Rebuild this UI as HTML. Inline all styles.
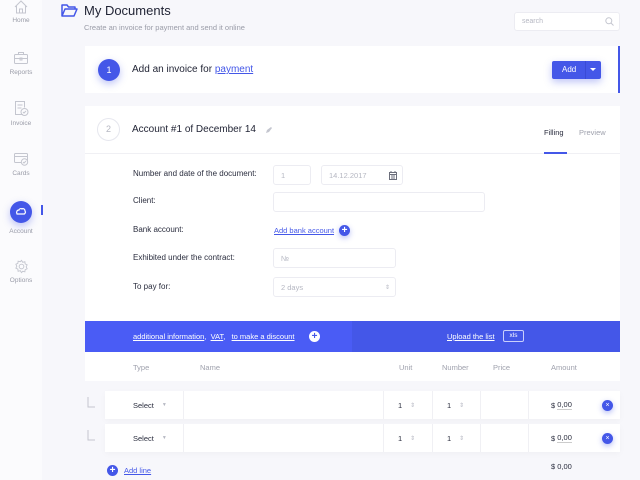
<!DOCTYPE html>
<html><head><meta charset="utf-8"><style>
*{box-sizing:border-box;margin:0;padding:0}
body{width:640px;height:480px;overflow:hidden;background:#f7f7fb;font-family:"Liberation Sans",sans-serif;color:#2a2d3e;position:relative}
.abs{position:absolute}
.side{left:0;top:0;width:42px;height:480px;background:#fbfbfd}
.nav{position:absolute;left:0;width:42px;text-align:center;font-size:6.5px;color:#9a9ca8}
.nav svg{display:block;margin:0 auto 3px}
.card{background:#fff;position:absolute}
.lbl{position:absolute;left:133px;font-size:8px;color:#2a2d3e}
.inp{position:absolute;border:1px solid #ececf2;border-radius:3px;background:#fff;font-size:7.5px;color:#b5b7c2;padding-left:7px;height:20px;display:flex;align-items:center}
.th{position:absolute;top:363px;font-size:7.5px;color:#9fa1ad}
.row{position:absolute;left:105px;width:515px;height:28px;background:#fff;box-shadow:0 2px 6px rgba(0,0,0,.03)}
.cell{position:absolute;top:0;height:28px;border-right:1px solid #f0f0f4;font-size:7.5px;display:flex;align-items:center}
.x{position:absolute;left:602px;width:11px;height:11px;border-radius:50%;background:#4457e8;color:#fff;font-size:7px;display:flex;align-items:center;justify-content:center;box-shadow:0 2px 6px rgba(68,87,232,.4)}
.plus{position:absolute;width:11px;height:11px;border-radius:50%;background:#4457e8;color:#fff;font-size:10px;display:flex;align-items:center;justify-content:center;font-weight:bold;line-height:1}
a{color:#4457e8;text-decoration:underline}
</style></head><body>
<div class="abs side"></div>
<div class="nav" style="top:0"><svg width="16" height="14" viewBox="0 0 16 14"><path d="M2 7L8 1l6 6M3.5 6v7h9V6M6.5 13V9h3v4" fill="none" stroke="#c4c6cf" stroke-width="1"/></svg>Home</div>
<div class="nav" style="top:50px"><svg width="16" height="16" viewBox="0 0 16 16"><rect x="1.5" y="4.5" width="13" height="9" rx="1" fill="none" stroke="#c4c6cf"/><path d="M5.5 4.5V2.5h5v2M1.5 8.5h13M7 8h2v2H7z" fill="none" stroke="#c4c6cf"/></svg>Reports</div>
<div class="nav" style="top:100px"><svg width="16" height="17" viewBox="0 0 16 17"><path d="M10 14.5H2.5v-13h9v6M4.5 5h5M4.5 8h4" fill="none" stroke="#c4c6cf"/><circle cx="11.5" cy="12" r="3.5" fill="none" stroke="#c4c6cf"/><path d="M10 12l1 1 2-2" fill="none" stroke="#c4c6cf"/></svg>Invoice</div>
<div class="nav" style="top:151px"><svg width="16" height="16" viewBox="0 0 16 16"><rect x="1.5" y="2.5" width="13" height="9" rx="1" fill="none" stroke="#c4c6cf"/><path d="M1.5 5.5h13" stroke="#c4c6cf"/><circle cx="11.5" cy="11" r="3.2" fill="#fbfbfd" stroke="#c4c6cf"/><path d="M10 11l1 1 2-2" fill="none" stroke="#c4c6cf"/></svg>Cards</div>
<div class="abs" style="left:10px;top:201px;width:22px;height:22px;border-radius:50%;background:#4457e8;box-shadow:0 3px 8px rgba(68,87,232,.35)"><svg width="22" height="22" viewBox="0 0 22 22"><path d="M7 13c-1-2 0-4 2-4 0-1 2-2 3-1 1-1 3 0 3 2 1 1 0 3-1 3z" fill="none" stroke="#fff" stroke-width="1.2"/></svg></div>
<div class="abs" style="left:41px;top:205px;width:2px;height:10px;background:#4457e8"></div>
<div class="nav" style="top:228px">Account</div>
<div class="nav" style="top:259px"><svg width="15" height="15" viewBox="0 0 16 16"><circle cx="8" cy="8" r="2.5" fill="none" stroke="#c4c6cf"/><path d="M8 1.5l1.3 2 2.3-.6.3 2.3 2.1 1-1 2.1 1 2.1-2.1 1-.3 2.3-2.3-.6L8 14.5l-1.3-2-2.3.6-.3-2.3-2.1-1 1-2.1-1-2.1 2.1-1 .3-2.3 2.3.6z" fill="none" stroke="#c4c6cf"/></svg>Options</div>

<svg class="abs" style="left:61px;top:4px" width="17" height="13" viewBox="0 0 17 13"><path d="M1 12V1h5l1.5 2H14v2M1 12l3-7h12l-3 7z" fill="none" stroke="#4457e8" stroke-width="1.5" stroke-linejoin="round"/></svg>
<div class="abs" style="left:84px;top:3px;font-size:13px;color:#1f2233">My Documents</div>
<div class="abs" style="left:84px;top:23px;font-size:7.5px;color:#9a9ca8">Create an invoice for payment and send it online</div>
<div class="abs" style="left:514px;top:12px;width:106px;height:19px;background:#fff;border:1px solid #ececf2;border-radius:3px;font-size:7px;color:#b5b7c2;padding-left:7px;line-height:17px">search<svg style="position:absolute;right:5px;top:4px" width="9" height="9" viewBox="0 0 9 9"><circle cx="3.8" cy="3.8" r="3" fill="none" stroke="#c4c6cf"/><path d="M6 6l2.5 2.5" stroke="#c4c6cf"/></svg></div>

<div class="card" style="left:85px;top:46px;width:535px;height:47px"></div>
<div class="abs" style="left:618px;top:46px;width:2px;height:47px;background:#4457e8"></div>
<div class="abs" style="left:98px;top:59px;width:22px;height:22px;border-radius:50%;background:#4457e8;color:#fff;font-size:9px;text-align:center;line-height:22px;box-shadow:0 3px 8px rgba(68,87,232,.35)">1</div>
<div class="abs" style="left:132px;top:64px;font-size:10px;color:#1f2233">Add an invoice for <a>payment</a></div>
<div class="abs" style="left:552px;top:61px;width:49px;height:18px;background:#4457e8;border-radius:2px;color:#fff;font-size:8px;line-height:18px;box-shadow:0 3px 8px rgba(68,87,232,.35)"><span style="position:absolute;left:10px">Add</span><span style="position:absolute;left:33px;top:0;height:18px;border-left:1px solid #3a4bd6"></span><span style="position:absolute;left:38px;top:7px;border:3px solid transparent;border-top-color:#fff"></span></div>

<div class="card" style="left:85px;top:106px;width:535px;height:216px"></div>
<div class="abs" style="left:85px;top:153px;width:535px;height:1px;background:#f0f0f4"></div>
<div class="abs" style="left:97px;top:118px;width:23px;height:23px;border-radius:50%;border:1px solid #e6e7ee;color:#b5b7c2;font-size:9px;text-align:center;line-height:21px">2</div>
<div class="abs" style="left:132px;top:124px;font-size:10px;color:#1f2233">Account #1 of December 14</div>
<svg class="abs" style="left:265px;top:126px" width="8" height="8" viewBox="0 0 8 8"><path d="M1 7l1-3 4-3 1 1-3 4z" fill="#c4c6cf"/></svg>
<div class="abs" style="left:544px;top:128px;font-size:7.5px;color:#2a2d3e">Filling</div>
<div class="abs" style="left:544px;top:152px;width:23px;height:2px;background:#4457e8"></div>
<div class="abs" style="left:579px;top:128px;font-size:7.5px;color:#9fa1ad">Preview</div>

<div class="lbl" style="top:169px">Number and date of the document:</div>
<div class="inp" style="left:273px;top:165px;width:38px">1</div>
<div class="inp" style="left:321px;top:165px;width:82px">14.12.2017<svg style="position:absolute;right:5px;top:5px" width="8" height="9" viewBox="0 0 8 9"><rect x=".5" y="1.5" width="7" height="7" fill="none" stroke="#6b6e7b"/><path d="M.5 3.5h7M2 0v2M6 0v2M2 5h4M2 7h4" stroke="#6b6e7b"/></svg></div>
<div class="lbl" style="top:196px">Client:</div>
<div class="inp" style="left:273px;top:192px;width:212px"></div>
<div class="lbl" style="top:225px">Bank account:</div>
<div class="abs" style="left:274px;top:226px;font-size:7.5px"><a>Add bank account</a></div>
<div class="plus" style="left:339px;top:225px;box-shadow:0 2px 6px rgba(68,87,232,.4)">+</div>
<div class="lbl" style="top:253px">Exhibited under the contract:</div>
<div class="inp" style="left:273px;top:248px;width:123px">№</div>
<div class="lbl" style="top:282px">To pay for:</div>
<div class="inp" style="left:273px;top:277px;width:123px">2 days<span style="position:absolute;right:5px;top:6px;font-size:6px">⇕</span></div>

<div class="abs" style="left:85px;top:321px;width:267px;height:31px;background:#4a5cf5"></div>
<div class="abs" style="left:352px;top:321px;width:268px;height:31px;background:#4457e8"></div>
<div class="abs" style="left:133px;top:332px;font-size:7.5px;color:#fff"><a style="color:#fff">additional information</a>, &nbsp;<a style="color:#fff">VAT</a>, &nbsp;&nbsp;<a style="color:#fff">to make a discount</a></div>
<div class="plus" style="left:309px;top:331px;background:#fff;color:#4457e8">+</div>
<div class="abs" style="left:447px;top:332px;font-size:7.5px"><a style="color:#fff">Upload the list</a></div>
<div class="abs" style="left:503px;top:330px;width:21px;height:12px;border:1px solid #c9cffb;border-radius:2px;color:#fff;font-size:6.5px;text-align:center;line-height:10px">xls</div>

<div class="card" style="left:85px;top:352px;width:535px;height:29px"></div>
<div class="th" style="left:133px">Type</div><div class="th" style="left:200px">Name</div><div class="th" style="left:399px">Unit</div><div class="th" style="left:442px">Number</div><div class="th" style="left:493px">Price</div><div class="th" style="left:551px">Amount</div>

<svg class="abs" style="left:87px;top:397px" width="10" height="12" viewBox="0 0 10 12"><path d="M1 0v10h7" fill="none" stroke="#c4c6cf"/></svg>
<div class="row" style="top:391px">
<div class="cell" style="left:0;width:79px;padding-left:28px">Select <span style="color:#b5b7c2;font-size:5px;margin-left:8px">▼</span></div>
<div class="cell" style="left:79px;width:200px"></div>
<div class="cell" style="left:279px;width:49px;padding-left:14px">1 <span style="color:#b5b7c2;font-size:6px;margin-left:8px">⇕</span></div>
<div class="cell" style="left:328px;width:48px;padding-left:14px">1 <span style="color:#b5b7c2;font-size:6px;margin-left:8px">⇕</span></div>
<div class="cell" style="left:376px;width:48px"></div>
<div class="cell" style="left:424px;width:91px;border:none;padding-left:22px">$&nbsp;<span style="border-bottom:1px solid #ccc">0,00</span></div>
</div>
<div class="x" style="top:400px">×</div>
<svg class="abs" style="left:87px;top:430px" width="10" height="12" viewBox="0 0 10 12"><path d="M1 0v10h7" fill="none" stroke="#c4c6cf"/></svg>
<div class="row" style="top:424px">
<div class="cell" style="left:0;width:79px;padding-left:28px">Select <span style="color:#b5b7c2;font-size:5px;margin-left:8px">▼</span></div>
<div class="cell" style="left:79px;width:200px"></div>
<div class="cell" style="left:279px;width:49px;padding-left:14px">1 <span style="color:#b5b7c2;font-size:6px;margin-left:8px">⇕</span></div>
<div class="cell" style="left:328px;width:48px;padding-left:14px">1 <span style="color:#b5b7c2;font-size:6px;margin-left:8px">⇕</span></div>
<div class="cell" style="left:376px;width:48px"></div>
<div class="cell" style="left:424px;width:91px;border:none;padding-left:22px">$&nbsp;<span style="border-bottom:1px solid #ccc">0,00</span></div>
</div>
<div class="x" style="top:433px">×</div>
<div class="plus" style="left:107px;top:465px">+</div>
<div class="abs" style="left:124px;top:466px;font-size:7.5px"><a>Add line</a></div>
<div class="abs" style="left:551px;top:462px;font-size:7.5px">$ 0,00</div>
</body></html>
